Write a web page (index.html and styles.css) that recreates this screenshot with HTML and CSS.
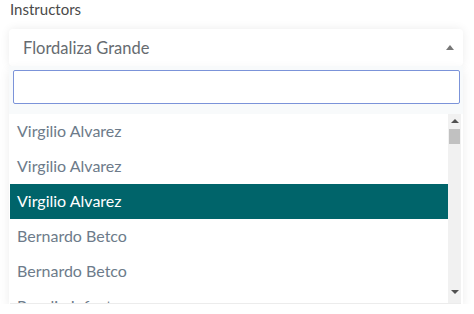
FILE: index.html
```html
<!DOCTYPE html>
<html lang="en">
<head>
    <meta charset="UTF-8">
    <meta name="viewport" content="width=device-width, initial-scale=1.0">
    <title>Instructors</title>
    <link rel="stylesheet" href="styles.css">
</head>
<body>
    <div class="field">
        <label class="field-label" for="instructor-search">Instructors</label>

        <div class="select">
            <span class="select-value">Flordaliza Grande</span>
            <span class="select-arrow"></span>
        </div>

        <div class="dropdown">
            <div class="search">
                <input type="text" id="instructor-search" class="search-input">
            </div>

            <div class="options-wrap">
                <ul class="options">
                    <li class="option">Virgilio Alvarez</li>
                    <li class="option">Virgilio Alvarez</li>
                    <li class="option option-active">Virgilio Alvarez</li>
                    <li class="option">Bernardo Betco</li>
                    <li class="option">Bernardo Betco</li>
                    <li class="option">Rosalie Infante</li>
                </ul>
                <div class="scrollbar">
                    <span class="scroll-up"></span>
                    <div class="scroll-track">
                        <div class="scroll-thumb"></div>
                    </div>
                    <span class="scroll-down"></span>
                </div>
            </div>
        </div>
    </div>
</body>
</html>
```

FILE: styles.css
```css
body {
    margin: 0;
    background-color: #ffffff;
    font-family: Lato, 'Open Sans', sans-serif;
}

.field {
    padding: 0 11px 0 9px;
}

.field-label {
    display: block;
    padding-left: 1px;
    font-size: 15px;
    line-height: 18px;
    color: #4a4a4a;
    margin-bottom: 11px;
}

.select {
    display: flex;
    align-items: center;
    justify-content: space-between;
    height: 37px;
    padding: 0 9px 0 14px;
    border-radius: 4px;
    background-color: #fff;
    box-shadow: 0 0 10px rgba(0,0,0,0.08);
}

.select-value {
    font-size: 16.5px;
    color: #666b70;
}

.select-arrow {
    width: 0;
    height: 0;
    border-left: 4px solid transparent;
    border-right: 4px solid transparent;
    border-bottom: 5px solid #777;
}

.dropdown {
    background-color: #fff;
    box-shadow: 0 4px 10px rgba(0,0,0,0.08);
}

.search {
    padding: 4px 3px 10px 4px;
    background-color: #f8fafb;
}

.search-input {
    display: block;
    width: 100%;
    height: 34px;
    box-sizing: border-box;
    border: 1.5px solid #7b93d9;
    border-radius: 2px;
    outline: none;
    background-color: #fff;
}

.options-wrap {
    display: flex;
    height: 189px;
    margin: 0 2px 0 1px;
    border-bottom: 1px solid #ececec;
    overflow: hidden;
}

.options {
    flex: 1;
    list-style: none;
    margin: 0;
    padding: 0;
}

.option {
    height: 35px;
    line-height: 34px;
    padding: 0 0 1px 7px;
    box-sizing: border-box;
    font-size: 16px;
    color: #6d7b8a;
}

.option-active {
    background-color: #00646a;
    color: #fff;
}

.scrollbar {
    display: flex;
    flex-direction: column;
    align-items: center;
    width: 13px;
    background-color: #f1f1f1;
}

.scroll-up,
.scroll-down {
    width: 0;
    height: 0;
    border-left: 4px solid transparent;
    border-right: 4px solid transparent;
    margin: 5px 0 6px;
}

.scroll-up {
    border-bottom: 4px solid #505050;
}

.scroll-down {
    border-top: 4px solid #505050;
    margin-bottom: 9px;
}

.scroll-track {
    flex: 1;
    width: 100%;
    padding: 0 1px;
    box-sizing: border-box;
}

.scroll-thumb {
    height: 15px;
    background-color: #c1c1c1;
}
```
